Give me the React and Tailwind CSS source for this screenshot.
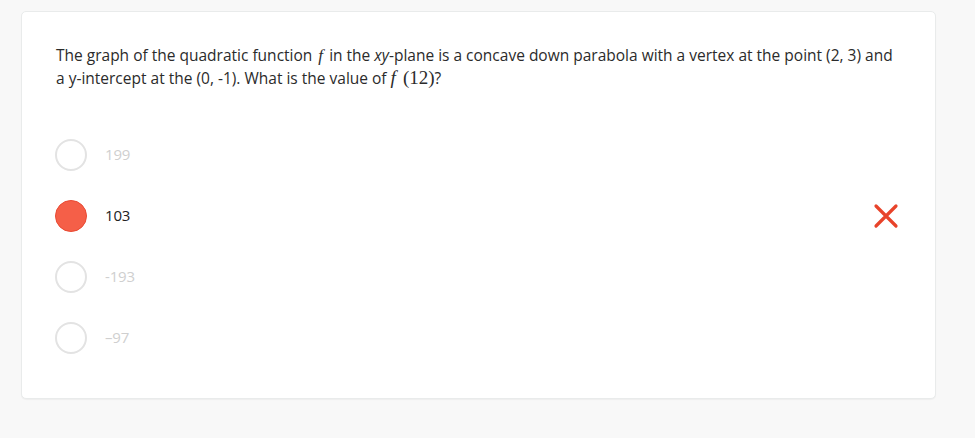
export default function App() {
  const options = [
    { label: "199", state: "idle" },
    { label: "103", state: "wrong" },
    { label: "-193", state: "idle" },
    { label: "\u201397", state: "idle" },
  ];
  const serif = { fontFamily: '"Liberation Serif", "DejaVu Serif", serif' };
  return (
    <div className="w-[975px] h-[438px] bg-[#f8f8f8] pt-[11px] pl-[21px]" style={{ fontFamily: '"Open Sans", "Noto Sans", sans-serif' }}>
      <div className="w-[915px] h-[388px] bg-white border border-[#e9ebeb] rounded-[5px] shadow-[0_1px_1px_rgba(0,0,0,0.04)] pt-[32px] pl-[33px] pr-[20px]">
        <p className="pl-px text-[15.5px] leading-[22px] text-[#2b2b2b] whitespace-nowrap">
          The graph of the quadratic function{" "}
          <span className="italic text-[17px] mx-[2px]" style={serif}>f</span>{" "}
          in the <span className="italic">xy</span>-plane is a concave down parabola with a vertex at the point (2, 3) and
          <br />
          a y-intercept at the (0, -1). What is the value of{" "}
          <span className="text-[19px] leading-[22px]" style={serif}>
            <span className="italic mr-[7px]">f</span>(12)
          </span>
          ?
        </p>
        <div className="mt-[35px] mr-[16px] flex flex-col">
          {options.map((o) => (
            <div key={o.label} className="h-[61px] flex items-center justify-between">
              <div className="flex items-center">
                {o.state === "wrong" ? (
                  <div className="w-[32px] h-[32px] rounded-full bg-[#f55f48] border border-[#e94a33]" />
                ) : (
                  <div className="w-[32px] h-[32px] rounded-full border-2 border-[#e3e3e3] bg-white" />
                )}
                <span className={`ml-[18px] text-[15px] tracking-[-0.2px] ${o.state === "wrong" ? "text-[#222222]" : "text-[#cfcfcf]"}`}>
                  {o.label}
                </span>
              </div>
              {o.state === "wrong" && (
                <svg width="26" height="26" viewBox="0 0 26 26">
                  <path d="M3 3 L23 23 M23 3 L3 23" stroke="#e8432a" strokeWidth="3.2" strokeLinecap="round" />
                </svg>
              )}
            </div>
          ))}
        </div>
      </div>
    </div>
  );
}
